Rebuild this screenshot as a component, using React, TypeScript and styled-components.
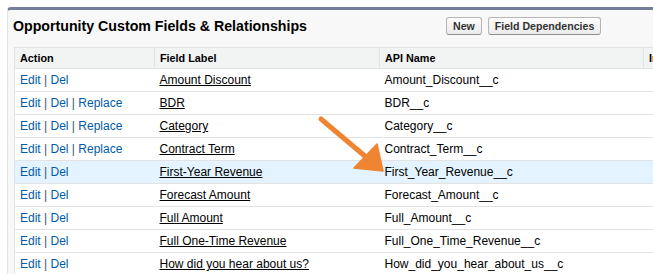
import React, { FC } from 'react';
import styled, { createGlobalStyle } from 'styled-components';

const GlobalStyle = createGlobalStyle`
  html, body {
    margin: 0;
    padding: 0;
    background: #ffffff;
    overflow: hidden;
  }
  body {
    font-family: 'Liberation Sans', Arial, sans-serif;
    color: #000;
  }
`;

const Page = styled.div`
  position: relative;
  width: 653px;
  height: 274px;
  padding: 7px 0 0 7px;
  box-sizing: border-box;
  overflow: hidden;
`;

const Panel = styled.div`
  width: 900px;
  background: #f8f8f8;
  border-top: 3px solid #747e96;
  border-left: 1px solid #e4e4e4;
  border-top-left-radius: 4px;
  height: 400px;
`;

const PanelHeader = styled.div`
  display: flex;
  align-items: center;
  height: 37px;
  padding-bottom: 6px;
  box-sizing: border-box;
`;

const Title = styled.h2`
  flex: 0 0 438px;
  margin: 0;
  padding-left: 5px;
  box-sizing: border-box;
  font-size: 14.2px;
  line-height: 20px;
  font-weight: bold;
  color: #000;
`;

const Buttons = styled.div`
  display: flex;
  gap: 6px;
`;

const Button = styled.button`
  font-family: 'Liberation Sans', Arial, sans-serif;
  font-size: 10.6px;
  font-weight: bold;
  color: #333;
  height: 18px;
  padding: 0 6px;
  line-height: 16px;
  background: linear-gradient(#fdfdfd, #ebebeb);
  border: 1px solid #b5b5b5;
  border-bottom-color: #8f8f8f;
  border-radius: 3px;
  cursor: pointer;
`;

const Table = styled.table`
  margin-left: 6px;
  border-collapse: collapse;
  background: #fff;
  table-layout: fixed;
  width: 800px;
  border-left: 1px solid #e0e3e5;
`;

const Th = styled.th<{ $w: number }>`
  width: ${(p) => p.$w}px;
  height: 21px;
  padding: 0 5px;
  box-sizing: border-box;
  text-align: left;
  font-size: 10.8px;
  font-weight: bold;
  color: #000;
  background: #f2f3f3;
  border: 1px solid #e0e3e5;
  white-space: nowrap;
  overflow: hidden;
`;

const Row = styled.tr<{ $hi?: boolean }>`
  background: ${(p) => (p.$hi ? '#e3f3ff' : '#fff')};
`;

const Td = styled.td`
  height: 22px;
  padding: 0 5px;
  font-size: 12px;
  border-bottom: 1px solid #e3e3e3;
  white-space: nowrap;
  overflow: hidden;
`;

const ActionLink = styled.a`
  color: #015ba7;
  text-decoration: none;
`;

const Sep = styled.span`
  color: #3b5572;
`;

const LabelLink = styled.a`
  color: #000;
  text-decoration: underline;
`;

const Arrow = styled.svg`
  position: absolute;
  left: 0;
  top: 0;
  pointer-events: none;
`;

interface FieldRow {
  label: string;
  api: string;
  replace?: boolean;
  hi?: boolean;
}

const rows: FieldRow[] = [
  { label: 'Amount Discount', api: 'Amount_Discount__c' },
  { label: 'BDR', api: 'BDR__c', replace: true },
  { label: 'Category', api: 'Category__c', replace: true },
  { label: 'Contract Term', api: 'Contract_Term__c', replace: true },
  { label: 'First-Year Revenue', api: 'First_Year_Revenue__c', hi: true },
  { label: 'Forecast Amount', api: 'Forecast_Amount__c' },
  { label: 'Full Amount', api: 'Full_Amount__c' },
  { label: 'Full One-Time Revenue', api: 'Full_One_Time_Revenue__c' },
  { label: 'How did you hear about us?', api: 'How_did_you_hear_about_us__c' },
];

const App: FC = () => {
  return (
    <Page>
      <GlobalStyle />
      <Panel>
        <PanelHeader>
          <Title>Opportunity Custom Fields &amp; Relationships</Title>
          <Buttons>
            <Button>New</Button>
            <Button>Field Dependencies</Button>
          </Buttons>
        </PanelHeader>
        <Table>
          <thead>
            <tr>
              <Th $w={140}>Action</Th>
              <Th $w={225}>Field Label</Th>
              <Th $w={264}>API Name</Th>
              <Th $w={171}>Installed Package</Th>
            </tr>
          </thead>
          <tbody>
            {rows.map((r) => (
              <Row key={r.api} $hi={r.hi}>
                <Td>
                  <ActionLink href="#">Edit</ActionLink> <Sep>|</Sep>{' '}
                  <ActionLink href="#">Del</ActionLink>
                  {r.replace && (
                    <>
                      {' '}
                      <Sep>|</Sep> <ActionLink href="#">Replace</ActionLink>
                    </>
                  )}
                </Td>
                <Td>
                  <LabelLink href="#">{r.label}</LabelLink>
                </Td>
                <Td>{r.api}</Td>
                <Td />
              </Row>
            ))}
          </tbody>
        </Table>
      </Panel>
      <Arrow width="653" height="274" viewBox="0 0 653 274">
        <line x1="321" y1="119" x2="366" y2="157" stroke="#ef8532" strokeWidth="5" strokeLinecap="round" />
        <polygon points="383,171 377,144 354,168" fill="#ef8532" stroke="#ef8532" strokeWidth="1.5" strokeLinejoin="round" />
      </Arrow>
    </Page>
  );
};

export default App;
